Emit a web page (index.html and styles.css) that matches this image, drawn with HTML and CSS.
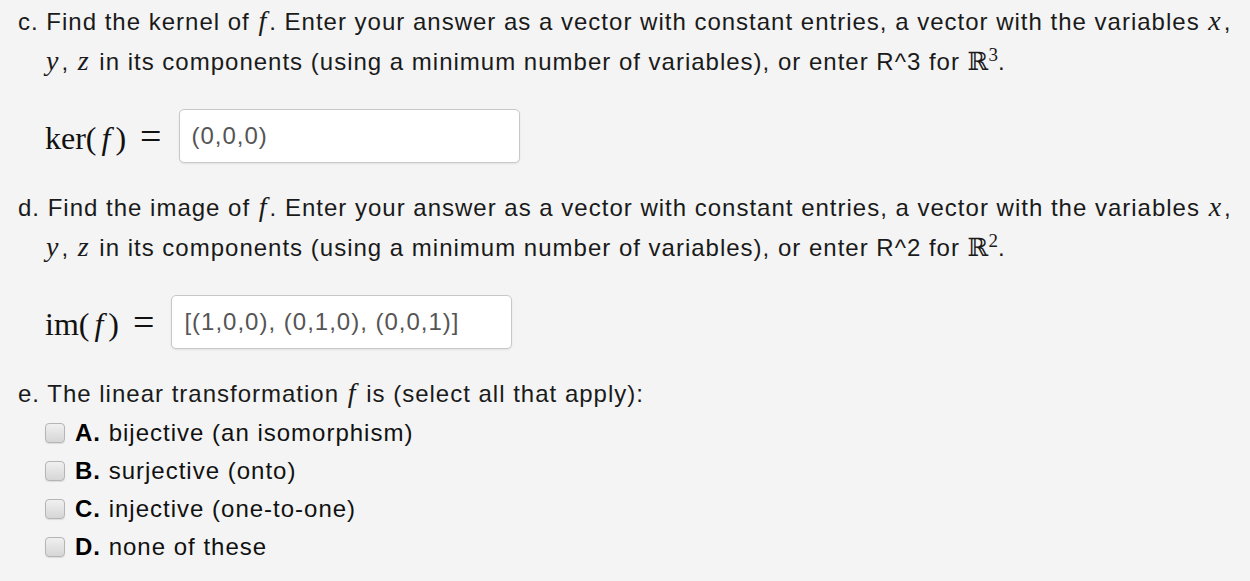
FILE: index.html
```html
<!DOCTYPE html>
<html lang="en">
<head>
    <meta charset="UTF-8">
    <title>Linear transformation</title>
    <link rel="stylesheet" href="styles.css">
</head>
<body>
    <div class="question">

        <!-- Part c: kernel -->
        <div class="part">
            <p class="prompt"><span class="label">c.</span> Find the kernel of <i class="mv">f</i>. Enter your answer as a vector with constant entries, a vector with the variables <i class="mv">x</i>, <i class="mv">y</i>, <i class="mv">z</i> in its components (using a minimum number of variables), or enter R^3 for <span class="mr">ℝ<sup>3</sup></span>.</p>
            <div class="answer-row">
                <span class="math">ker(<i>f</i>)<span class="eq">=</span></span>
                <input type="text" class="answer" value="(0,0,0)">
            </div>
        </div>

        <!-- Part d: image -->
        <div class="part">
            <p class="prompt"><span class="label">d.</span> Find the image of <i class="mv">f</i>. Enter your answer as a vector with constant entries, a vector with the variables <i class="mv">x</i>, <i class="mv">y</i>, <i class="mv">z</i> in its components (using a minimum number of variables), or enter R^2 for <span class="mr">ℝ<sup>2</sup></span>.</p>
            <div class="answer-row">
                <span class="math">im(<i>f</i>)<span class="eq">=</span></span>
                <input type="text" class="answer" value="[(1,0,0), (0,1,0), (0,0,1)]">
            </div>
        </div>

        <!-- Part e: properties -->
        <div class="part">
            <p class="prompt"><span class="label">e.</span> The linear transformation <i class="mv">f</i> is (select all that apply):</p>
            <ul class="choices">
                <li><input type="checkbox" id="optA"><label for="optA"><b>A.</b> bijective (an isomorphism)</label></li>
                <li><input type="checkbox" id="optB"><label for="optB"><b>B.</b> surjective (onto)</label></li>
                <li><input type="checkbox" id="optC"><label for="optC"><b>C.</b> injective (one-to-one)</label></li>
                <li><input type="checkbox" id="optD"><label for="optD"><b>D.</b> none of these</label></li>
            </ul>
        </div>

    </div>
</body>
</html>
```

FILE: styles.css
```css
body {
    margin: 0;
    background-color: #f4f4f4;
    font-family: "Liberation Sans", Arial, sans-serif;
    font-size: 24px;
    letter-spacing: 1px;
    color: #1a1a1a;
}
.question {
    padding: 2px 0 0 18px;
}
.prompt {
    margin: 0;
    line-height: 40px;
    padding-left: 27px;
    text-indent: -27px;
}
.mv {
    font-family: "Liberation Serif", "Times New Roman", serif;
    font-size: 28px;
    line-height: 1;
    letter-spacing: 0;
    padding: 0 3px 0 1px;
}
.mr {
    font-family: "DejaVu Serif", serif;
    font-size: 25px;
    line-height: 1;
    letter-spacing: 0;
}
.mr sup {
    font-family: "Liberation Serif", serif;
    font-size: 19px;
    line-height: 0;
}
.answer-row {
    display: flex;
    align-items: center;
    margin: 27px 0 25px 27px;
}
.math {
    font-family: "Liberation Serif", "Times New Roman", serif;
    font-size: 32px;
    line-height: 1;
    letter-spacing: 0;
    color: #111;
}
.math i {
    padding: 0 5px;
}
.eq {
    font-size: 38px;
    margin: 0 17px 0 14px;
}
.answer {
    box-sizing: border-box;
    width: 341px;
    height: 54px;
    padding: 0 12px;
    border: 1px solid #c8c8c8;
    border-radius: 5px;
    box-shadow: 0 1px 2px rgba(0, 0, 0, 0.08);
    background: #fff;
    font-family: "Liberation Sans", Arial, sans-serif;
    font-size: 24px;
    letter-spacing: 1px;
    color: #555;
}
.choices {
    list-style: none;
    margin: 0;
    padding: 0 0 0 27px;
}
.choices li {
    display: flex;
    align-items: center;
    height: 38px;
}
.choices input {
    appearance: none;
    -webkit-appearance: none;
    width: 20px;
    height: 20px;
    margin: 0 10px 0 0;
    border: 1px solid #b5b5b5;
    border-radius: 4px;
    background: linear-gradient(#f0f0f0, #d6d6d6);
    box-shadow: 0 1px 1px rgba(0, 0, 0, 0.1);
}
.choices label {
    color: #111;
}
.choices b {
    color: #000;
}
```
